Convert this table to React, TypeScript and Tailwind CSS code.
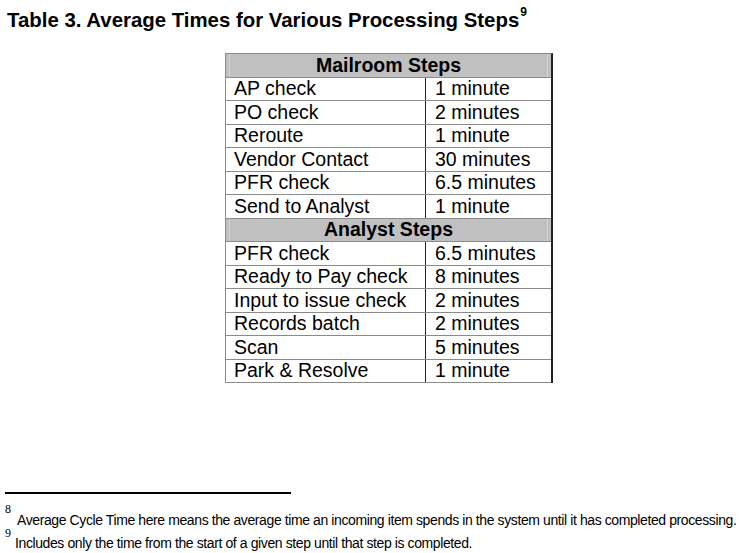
const mailroom = [
  ['AP check', '1 minute'],
  ['PO check', '2 minutes'],
  ['Reroute', '1 minute'],
  ['Vendor Contact', '30 minutes'],
  ['PFR check', '6.5 minutes'],
  ['Send to Analyst', '1 minute'],
]

const analyst = [
  ['PFR check', '6.5 minutes'],
  ['Ready to Pay check', '8 minutes'],
  ['Input to issue check', '2 minutes'],
  ['Records batch', '2 minutes'],
  ['Scan', '5 minutes'],
  ['Park & Resolve', '1 minute'],
]

function SectionHead({ label }: { label: string }) {
  return (
    <div className="h-[23.5px] border-b border-[#8a8a8a] bg-[#c0c0c0] px-[3px]">
      <div className="h-full border-x border-[#d6d6d6] flex items-center justify-center text-[19.5px] font-bold leading-none">
        {label}
      </div>
    </div>
  )
}

function Row({ step, time }: { step: string; time: string }) {
  return (
    <div className="h-[23.5px] border-b border-[#8a8a8a] grid grid-cols-[200px_1fr] text-[19.5px] leading-none">
      <div className="flex items-center pl-[8px] border-r border-[#222]">{step}</div>
      <div className="flex items-center pl-[9px]">{time}</div>
    </div>
  )
}

export default function App() {
  return (
    <div
      className="w-[743px] h-[553px] bg-white text-black flex flex-col"
      style={{ fontFamily: '"Liberation Sans", Arial, sans-serif' }}
    >
      {/* Title */}
      <h1 className="pl-[7px] pt-[8px] text-[20.4px] font-bold leading-[24px]">
        Table 3. Average Times for Various Processing Steps
        <span className="relative -top-[11px] ml-[1px] text-[12px] leading-none">9</span>
      </h1>

      {/* Table */}
      <div className="ml-[225px] mt-[21px] w-[328px] border-t border-l border-[#8a8a8a] border-r-2 border-r-[#222]">
        <SectionHead label="Mailroom Steps" />
        {mailroom.map(([s, t]) => (
          <Row key={'m' + s} step={s} time={t} />
        ))}
        <SectionHead label="Analyst Steps" />
        {analyst.map(([s, t]) => (
          <Row key={'a' + s} step={s} time={t} />
        ))}
      </div>

      {/* Footnotes */}
      <div className="mt-auto pb-[2px]">
        <div className="ml-[5px] w-[286px] h-[2px] bg-black" />
        <div className="mt-[9px] pl-[5px] text-[14px] leading-[16px] tracking-[-0.4px]">
          <div className="font-['Liberation_Serif',serif] text-[12px] leading-[12px] tracking-normal">8</div>
          <div className="pl-[12px] -mt-[3px]">
            Average Cycle Time here means the average time an incoming item spends in the system until it has completed processing.
          </div>
          <div className="-mt-[1px] font-['Liberation_Serif',serif] text-[12px] leading-[12px] tracking-normal">9</div>
          <div className="pl-[10px] -mt-[4px]">
            Includes only the time from the start of a given step until that step is completed.
          </div>
        </div>
      </div>
    </div>
  )
}
